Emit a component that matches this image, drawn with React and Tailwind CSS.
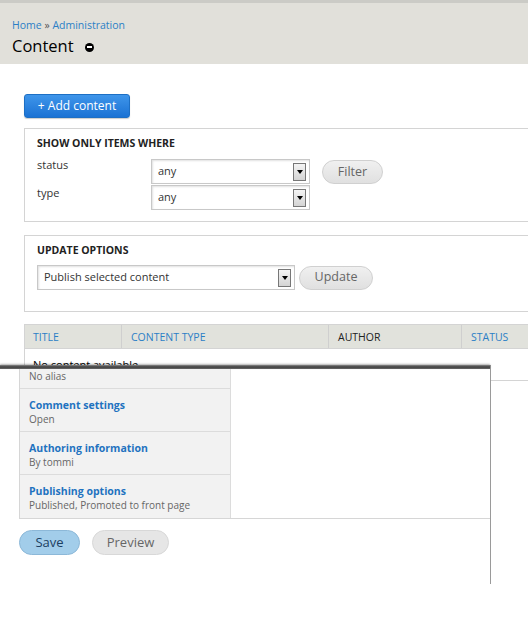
import React from 'react';

const font = { fontFamily: '"Open Sans", "Noto Sans", Arial, sans-serif' };

function SelectBox({ value, width }) {
  return (
    <div className={`flex items-center justify-between bg-white border border-[#c8c8c8] shadow-[inset_1px_1px_2px_rgba(0,0,0,0.12)] h-[25px] pl-[6px] pr-[3px] ${width}`}>
      <span className="text-[11px] text-[#333]">{value}</span>
      <span className="flex items-center justify-center w-[13px] h-[18px] border border-[#777] bg-gradient-to-b from-[#f4f4f4] to-[#d4d4d4]">
        <span className="block w-0 h-0 border-l-[3px] border-r-[3px] border-t-[4px] border-l-transparent border-r-transparent border-t-black" />
      </span>
    </div>
  );
}

function PillButton({ children, className = '' }) {
  return (
    <button className={`h-[24px] rounded-full border border-[#d0d0d0] bg-gradient-to-b from-[#f0f0f0] to-[#e0e0e0] text-[12.5px] text-[#666] ${className}`}>
      {children}
    </button>
  );
}

const tabs = [
  { title: 'Comment settings', sub: 'Open' },
  { title: 'Authoring information', sub: 'By tommi' },
  { title: 'Publishing options', sub: 'Published, Promoted to front page' },
];

export default function App() {
  return (
    <div className="relative w-[528px] h-[633px] overflow-hidden bg-white" style={font}>
      {/* Header */}
      <div className="h-[64px] bg-[#e1e0da] border-t-[3px] border-[#cbcbc6] pl-[12px]">
        <div className="pt-[15px] text-[10.5px] text-[#2b7fc6] leading-[14px]">
          <span>Home</span> <span className="text-[#555]">»</span> <span>Administration</span>
        </div>
        <div className="flex items-center mt-[3px] h-[22px]">
          <h1 className="text-[16.5px] text-black leading-[22px]">Content</h1>
          <span className="ml-[11px] mt-[2px] flex items-center justify-center w-[9px] h-[9px] rounded-full bg-black">
            <span className="block w-[5px] h-[2px] bg-white" />
          </span>
        </div>
      </div>

      <div className="pl-[24px]">
        <button className="mt-[30px] h-[24px] w-[106px] rounded-[3px] border border-[#1d6fc4] bg-gradient-to-b from-[#3e95ea] to-[#1a72d4] text-white text-[12px] shadow-[0_1px_1px_rgba(0,0,0,0.2)]">
          + Add content
        </button>

        {/* Filter fieldset */}
        <div className="mt-[10px] w-[520px] h-[94px] border border-[#d4d4d4] pl-[12px] pt-[7px]">
          <div className="text-[10.5px] font-bold text-[#222] leading-[14px]">SHOW ONLY ITEMS WHERE</div>
          <div className="flex mt-[9px]">
            <div className="flex flex-col">
              <div className="flex">
                <span className="w-[114px] text-[11px] text-[#333] leading-[14px] -mt-[1px]">status</span>
                <SelectBox value="any" width="w-[159px]" />
              </div>
              <div className="flex mt-[1px]">
                <span className="w-[114px] text-[11px] text-[#333] leading-[14px] mt-[1px]">type</span>
                <SelectBox value="any" width="w-[159px]" />
              </div>
            </div>
            <PillButton className="ml-[12px] w-[61px] mt-[1px]">Filter</PillButton>
          </div>
        </div>

        {/* Update options */}
        <div className="mt-[13px] w-[520px] h-[77px] border border-[#d4d4d4] pl-[12px] pt-[7px]">
          <div className="text-[10.5px] font-bold text-[#222] leading-[14px]">UPDATE OPTIONS</div>
          <div className="flex items-center mt-[8px]">
            <SelectBox value="Publish selected content" width="w-[258px]" />
            <PillButton className="ml-[4px] w-[74px]">Update</PillButton>
          </div>
        </div>

        {/* Table */}
        <div className="mt-[12px] w-[520px] border border-[#d4d4d4] h-[57px]">
          <div className="flex h-[24px] bg-[#e1e2dc] border-b border-[#d4d4d4] text-[10.5px] leading-[24px]">
            <div className="w-[97px] pl-[8px] text-[#2b7fc6] border-r border-[#cfcfcf]">TITLE</div>
            <div className="w-[207px] pl-[9px] text-[#2b7fc6] border-r border-[#cfcfcf]">CONTENT TYPE</div>
            <div className="w-[133px] pl-[9px] text-[#222] border-r border-[#cfcfcf]">AUTHOR</div>
            <div className="pl-[9px] text-[#2b7fc6]">STATUS</div>
          </div>
          <div className="pl-[8px] pt-[8px] text-[11px] text-black">No content available.</div>
        </div>
      </div>

      {/* Overlaid second screenshot */}
      <div className="absolute left-0 top-[365px] w-[491px] h-[219px] bg-white border-r border-r-[#9a9a9a]">
        <div className="h-[4px] bg-gradient-to-b from-[#8a8a8a] via-[#3f3f3f] to-[#6a6a6a] shadow-[0_-1px_2px_rgba(0,0,0,0.3)]" />
        <div className="ml-[19px] border-l border-b border-[#d6d6d6] flex">
          <div className="w-[211px] bg-[#f2f2f2] border-r border-[#dcdcdc]">
            <div className="h-[20px] border-b border-[#dcdcdc] pl-[9px] text-[10px] text-[#666] leading-[14px]">No alias</div>
            {tabs.map((t, i) => (
              <div key={t.title} className={`h-[43px] pl-[9px] pt-[9px] ${i < tabs.length - 1 ? 'border-b border-[#dcdcdc]' : ''}`}>
                <div className="text-[10.5px] font-bold text-[#1f72c0] leading-[14px]">{t.title}</div>
                <div className="text-[10px] text-[#666] leading-[14px]">{t.sub}</div>
              </div>
            ))}
          </div>
          <div className="flex-1" />
        </div>
        <div className="flex ml-[19px] mt-[11px]">
          <button className="h-[25px] w-[61px] rounded-full border border-[#8cb8d8] bg-[#a2cdea] text-[13px] text-[#1c3f61]">Save</button>
          <button className="ml-[12px] h-[25px] w-[77px] rounded-full border border-[#d8d8d8] bg-[#e6e6e6] text-[13px] text-[#666]">Preview</button>
        </div>
      </div>
    </div>
  );
}
